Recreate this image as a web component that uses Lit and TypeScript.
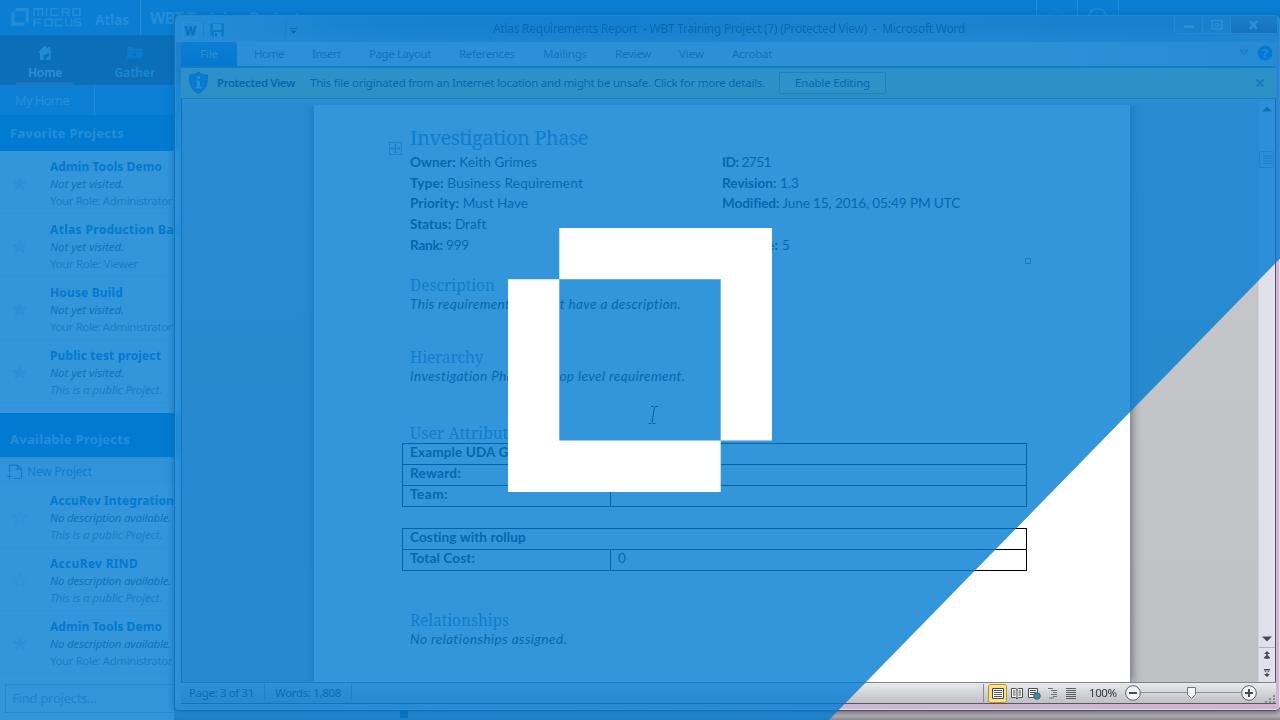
import { LitElement, html, css } from "lit";
import { customElement, property } from "lit/decorators.js";

/** Inline label whose tracking is adjusted so that it fills a given measure. */
@customElement("fit-text")
class FitText extends LitElement {
  @property({ type: Number }) w = 0;
  static styles = css`
    :host { display: inline-block; white-space: pre; flex: none; }
  `;
  firstUpdated() {
    const n = (this.textContent || "").length;
    const natural = this.getBoundingClientRect().width;
    if (n && this.w) this.style.letterSpacing = `${(this.w - natural) / n}px`;
  }
  render() { return html`<slot></slot>`; }
}

const starPath = "M8 1l2 5h5.2l-4.1 3.2 1.5 5.3L8 11.4l-4.6 3.1 1.5-5.3L.8 6H6z";

const favorites = [
  { t: "Admin Tools Demo", w: 112, d: "Not yet visited.", dw: 74, r: "Your Role: Administrator", rw: 122, on: true },
  { t: "Atlas Production Back", w: 138, d: "Not yet visited.", dw: 74, r: "Your Role: Viewer", rw: 88, on: true },
  { t: "House Build", w: 73, d: "Not yet visited.", dw: 74, r: "Your Role: Administrator", rw: 122, on: true },
  { t: "Public test project", w: 111, d: "Not yet visited.", dw: 74, r: "This is a public Project.", rw: 112, on: true, pub: true },
];
const available = [
  { t: "AccuRev Integration", w: 124, d: "No description available.", dw: 121, r: "This is a public Project.", rw: 112, on: false, pub: true },
  { t: "AccuRev RIND", w: 88, d: "No description available.", dw: 121, r: "This is a public Project.", rw: 112, on: false, pub: true },
  { t: "Admin Tools Demo", w: 112, d: "No description available.", dw: 121, r: "Your Role: Administrator", rw: 122, on: true },
];
const tabs: [string, number][] = [
  ["Home", 30], ["Insert", 29], ["Page Layout", 62], ["References", 56],
  ["Mailings", 44], ["Review", 36], ["View", 25], ["Acrobat", 40],
];

@customElement("app-root")
class AppRoot extends LitElement {
  static styles = css`
    :host { display: block; position: relative; width: 1280px; height: 720px; overflow: hidden; background: #fff; font-family: "Noto Sans", "Open Sans", sans-serif; }
    * { box-sizing: border-box; }
    svg { display: block; flex: none; }

    .atlas { width: 1280px; height: 720px; display: flex; flex-direction: column; background: linear-gradient(#2a5a8c, #2a5a8c) 400px 704px / 8px 14px no-repeat, linear-gradient(#b4b2b8, #b8b6ba 70%, #8a888c) 174px 706px / 1106px 14px no-repeat, #fff; }
    .top { height: 35px; background: #2e8ddd; display: flex; align-items: center; color: #d3e5f5; }
    .brand { display: flex; width: 141px; height: 35px; border-right: 1px solid #a8d0f0; padding: 7px 0 0 10px; gap: 3px; }
    .atlasname { font: 600 14px/24px "Noto Sans", sans-serif; color: #c4dcf0; margin: 1px 0 0 10px; }
    .proj { font: 600 16px/24px "Noto Sans", sans-serif; margin-left: 9px; color: #c4dcf0; }
    .cells { margin-left: auto; display: flex; height: 35px; margin-right: 161px; }
    .cell { width: 41px; border-left: 1px solid #a8d0f0; padding: 7px 0 0 9px; }
    .cell.last { border-right: 1px solid #a8d0f0; width: 42px; }
    .nav { height: 50px; background: #354350; display: flex; }
    .navitem { width: 90px; display: flex; flex-direction: column; align-items: center; padding-top: 10px; font: 600 12px/18px "Noto Sans", sans-serif; color: #86b8e2; }
    .navitem.on { color: #d4e2f0; }
    .navitem svg { margin-bottom: 3px; }
    .under { width: 58px; height: 3px; background: #c04848; }
    .sub { height: 30px; background: #3290de; display: flex; color: #bcdcf5; font: 13px/30px "Noto Sans", sans-serif; padding-left: 15px; }
    .sub .cellend { width: 80px; border-right: 1px solid #a8d0f0; height: 30px; }
    .side { width: 180px; }
    .hd { height: 36px; background: #0579d0; color: #b3d5f2; font: 700 13px/36px "Noto Sans", sans-serif; padding-left: 10px; }
    .hd.second { height: 44px; padding-top: 8px; }
    .item { display: flex; height: 63px; border-bottom: 1px solid #edf2f6; padding-left: 12px; }
    .item svg { margin-top: 25px; }
    .txt { padding: 7px 0 0 23px; display: flex; flex-direction: column; align-items: flex-start; }
    .t { font: 700 12px/18px "Noto Sans", sans-serif; color: #0b6fc0; margin-bottom: -1px; }
    .d { font: italic 11.5px/17px "Noto Sans", sans-serif; color: #4a5560; }
    .r { font: 11.5px/17px "Noto Sans", sans-serif; color: #7d8a96; }
    .r.pub { font-style: italic; }
    .gap { height: 10px; }
    .new { height: 28px; background: #f2f6f9; display: flex; align-items: center; padding: 1px 0 0 7px; gap: 4px; font: 12px/27px "Noto Sans", sans-serif; color: #4a88c0; }
    .find { margin: 10px 0 0 5px; height: 29px; width: 180px; border: 1px solid #b8c4ce; font: 13px/27px "Noto Sans", sans-serif; color: #93a1ae; padding-left: 6px; }

    .win { position: absolute; left: 174px; top: 15px; width: 1106px; height: 696px; border-radius: 6px 6px 5px 5px; border: 1px solid #514a58; border-top-color: #9cc8e8; border-right: none; background: linear-gradient(90deg, rgba(200, 218, 236, .6), #cbb8d2 60%, #d3b4d0); backdrop-filter: blur(5px); box-shadow: 0 0 7px 1px rgba(0, 15, 40, .55), inset 0 0 0 1px rgba(255, 255, 255, .55); padding: 0 4px 6px 6px; display: flex; flex-direction: column; }
    .title { height: 26px; display: flex; margin: 0 -3px 0 -5px; border-radius: 5px 5px 0 0; background: linear-gradient(transparent 40%, rgba(200, 222, 242, .4)), linear-gradient(90deg, rgba(190, 218, 242, .9), rgba(105, 155, 205, .85) 18%, rgba(80, 135, 190, .8) 40%, rgba(120, 165, 205, .8) 62%, rgba(95, 140, 190, .85) 92%, rgba(130, 160, 195, .8)); color: #16242f; font: 12px/25px "Noto Sans", sans-serif; }
    .qat { display: flex; padding: 6px 0 0 6px; width: 317px; color: #20303c; }
    .qat .sp { width: 1px; height: 15px; background: #7c96b4; margin: 0 6px 0 4px; }
    .qat .sp.b { margin: 0 3px 0 60px; }
    .ctl { margin: 0 1px 0 auto; display: flex; height: 18px; border: 1px solid #a8c4de; border-top: 0; border-radius: 0 0 4px 4px; }
    .ctl div { width: 28px; display: flex; align-items: center; justify-content: center; border-right: 1px solid #a8c4de; }
    .ctl .cl { width: 46px; background: linear-gradient(#8a86a0, #774d6c); border-right: 0; }
    .tabs { height: 24px; display: flex; background: linear-gradient(90deg, #d6e2f0, #dce6f0 80%, #bfcbdc); font: 11.5px/23px "Noto Sans", sans-serif; color: #4b5963; gap: 28px; border-radius: 2px 2px 0 0; }
    .file { width: 56px; height: 24px; margin-right: -11px; background: linear-gradient(#3a8ce0, #1c6acc); border-radius: 3px 3px 0 0; color: #c6daf0; padding-left: 19px; }
    .tabend { margin-left: auto; display: flex; gap: 6px; padding: 3px 2px 0 0; }
    .msg { height: 33px; border-top: 2px solid #6d7c90; border-bottom: 1px solid #7a9098; background: linear-gradient(#dde8b0, #e2e490); display: flex; align-items: center; padding-left: 7px; font: 11.5px/26px "Noto Sans", sans-serif; color: #121c24; }
    .msg .pv { font-weight: 600; margin: 0 15px 0 8px; }
    .msg .btn { margin-left: 14px; width: 107px; height: 22px; line-height: 20px; border: 1px solid #8c9a78; border-radius: 2px; padding-left: 15px; background: rgba(255, 255, 255, .12); }
    .msg .x { margin-left: auto; margin-right: 11px; }
    .work { height: 583px; display: flex; background: #c5c6ca; border-left: 1px solid #515863; }
    .canvas { flex: 1; padding: 6px 0 0 132px; background: linear-gradient(#e0e5ec, #c6c8cc 6px, #c5c6ca 180px, #c0c1c5); }
    .page { width: 816px; height: 577px; background: #fff; box-shadow: 3px 0 8px rgba(60, 60, 70, .5), -3px 0 7px rgba(60, 60, 70, .22); clip-path: inset(0 -14px 0 -12px); padding: 20px 0 0 88px; font: 13.6px/21px Lato, "Open Sans", sans-serif; color: #151515; position: relative; }
    h1, h2, p { margin: 0; font-weight: 400; }
    h1 { font: 20px/26px "Noto Serif", "Droid Serif", "DejaVu Serif Condensed", "DejaVu Serif", serif; color: #4f86bd; height: 27px; padding-left: 8px; }
    h2 { font: 15.5px/19px "Noto Serif", "Droid Serif", "DejaVu Serif Condensed", "DejaVu Serif", serif; color: #4f86bd; height: 20px; padding-left: 8px; }
    h2.hier { margin-top: 34px; }
    h2.attr { margin-top: 38px; }
    h2.rel { margin-top: 40px; }
    p { padding-left: 8px; font-style: italic; line-height: 18px; height: 19px; margin-top: -1px; }
    .facts { display: grid; grid-template-columns: 312px 1fr; grid-template-rows: 21px 20px 21px 21px 21px; padding-left: 8px; height: 124px; }
    .tbl { width: 625px; border: 1px solid #000; border-bottom: 0; display: grid; grid-template-columns: 208px 1fr; grid-auto-rows: 21px; line-height: 17px; margin-top: -1px; }
    .tbl.cost { margin-top: 21px; }
    .tbl div { border-bottom: 1px solid #000; padding-left: 7px; }
    .tbl .full { grid-column: 1 / 3; }
    .tbl .l { border-right: 1px solid #000; }
    .mv { position: absolute; left: 75px; top: 37px; }
    .sq { position: absolute; left: 711px; top: 153px; width: 6px; height: 6px; border: 1px solid #777; }
    .bar { width: 18px; background: #e0e1ed; border-left: 1px solid #d2d3de; border-right: 1px solid #5b5662; color: #464a58; }
    .status { height: 22px; border-top: 1px solid #82848a; border-bottom: 1px solid #5b5662; background: linear-gradient(#e8e9ec, #c6c8cd 80%, #bfc1c7); display: flex; align-items: center; font: 11.5px/20px "Noto Sans", sans-serif; color: #2e3238; padding-left: 8px; }
    .status .v { width: 1px; height: 18px; background: #9fa2a8; margin: 0 10px; }
    .tools { margin-left: auto; }

    .veil { position: absolute; inset: 0; background: rgba(0, 122, 209, .8); clip-path: polygon(0 0, 1280px 0, 1280px 258.5px, 829px 720px, 0 720px); }
    .mark { position: absolute; left: 508px; top: 228px; }
    .caret { position: absolute; left: 647px; top: 405px; }
  `;

  item(i: any) {
    return html`<div class="item">
      <svg width="15" height="15" viewBox="0 0 16 16"><path d=${starPath} fill=${i.on ? "#d2e4f4" : "none"} stroke="#d2e2f0" stroke-width=".8"/></svg>
      <div class="txt">
        <fit-text class="t" w=${i.w}>${i.t}</fit-text>
        <fit-text class="d" w=${i.dw}>${i.d}</fit-text>
        <fit-text class="r ${i.pub ? "pub" : ""}" w=${i.rw}>${i.r}</fit-text>
      </div></div>`;
  }

  fact(k: string, v: string, w: number) {
    return html`<div><fit-text w=${w}><b>${k}</b>${v}</fit-text></div>`;
  }

  atlas() {
    return html`<div class="atlas">
      <div class="top">
        <div class="brand">
          <svg width="72" height="21" viewBox="0 0 72 21" fill="none" stroke="#b5d3ec">
            <path d="M5.500 2.500H17.500V14.500" stroke-width="3"/><path d="M2.800 5.500V17.200H14.500" stroke-width="3"/><path d="M4.200 4h12v12h-12z" stroke-width=".6"/>
            <g stroke-width="1.500">
              <path d="M24 9V1.800h8.500V9M28.200 1.800V9M36.500 1V9M48.500 1.800h-7.500V8.200H48.500M52.500 9V1.800h6.500V5.500H52.500M56 5.500L59.500 9M63 1.800h7V8.200H63z"/>
              <path d="M24 19.500V12.200h8.500M24 15.700h7M35 12.200h7.200V18.500H35zM53 12.200h-7.500V18.500H53M55.800 11.500V18.500H61.800V11.500M71 12.200h-6.300V15.300H70.500V18.600H64"/>
            </g>
          </svg>
          <fit-text class="atlasname" w="34">Atlas</fit-text>
        </div>
        <fit-text class="proj" w="150">WBT Training Project</fit-text>
        <div class="cells">
          <div class="cell"><svg width="22" height="22" viewBox="0 0 22 22"><circle cx="10.500" cy="10.500" r="9" fill="#4a92d0" stroke="#6d9cc8"/></svg></div>
          <div class="cell last"><svg width="22" height="22" viewBox="0 0 22 22"><circle cx="10.500" cy="10.500" r="9" fill="none" stroke="#b5d8f2" stroke-width="1.700"/><path d="M10.500 5v6h4" fill="none" stroke="#b5d8f2"/></svg></div>
        </div>
      </div>
      <div class="nav">
        <div class="navitem on">
          <svg width="16" height="16" viewBox="0 0 16 16"><path d="M8 .5L.5 7.500H3V15H6.500V10H9.500V15H13.500V7.500H15.500L13.200 5.200V2H11.200V3.400z" fill="#a5cbe8"/><path d="M9 8.500h3v3H9z" fill="#31404c"/></svg>
          <fit-text w="34">Home</fit-text><span class="under"></span></div>
        <div class="navitem">
          <svg width="16" height="16" viewBox="0 0 16 16"><path d="M0 2h6l1 1.500h8.500V6H0z" fill="#2a85cc"/><path d="M0 6.500h15.500V13H0z" fill="#2a7fc4"/><path d="M6 7.800l4 2-4 2z" fill="#3a4650"/></svg>
          <fit-text w="41">Gather</fit-text></div>
      </div>
      <div class="sub"><div class="cellend"><fit-text w="54">My Home</fit-text></div></div>
      <div class="side">
        <div class="hd"><fit-text w="114">Favorite Projects</fit-text></div>
        ${favorites.map((i) => this.item(i))}
        <div class="gap"></div>
        <div class="hd second"><fit-text w="120">Available Projects</fit-text></div>
        <div class="new">
          <svg width="16" height="16" viewBox="0 0 16 16" fill="none" stroke="#4080b8" stroke-width="1.200"><path d="M2.500 8V1.200H10.500L14.500 5V14.500H6.500M10.200 1.200V5.200H14.500M2.500 9.500v6M0 12.500H5"/></svg>
          <fit-text w="65">New Project</fit-text></div>
        ${available.map((i) => this.item(i))}
        <div class="find"><fit-text w="85">Find projects...</fit-text></div>
      </div>
    </div>`;
  }

  page() {
    return html`<div class="page">
      <svg class="mv" width="14" height="14" viewBox="0 0 14 14" fill="none" stroke="#5a6a7c"><rect x=".5" y=".5" width="12" height="12" stroke="#8c9eb2"/><path d="M6.500 2v9M2 6.500h9M5 3.500L6.500 2 8 3.500M5 9.500L6.500 11 8 9.500M3.500 5L2 6.500 3.500 8M9.500 5L11 6.500 9.500 8" stroke-width=".8"/></svg>
      <span class="sq"></span>
      <h1><fit-text w="178">Investigation Phase</fit-text></h1>
      <div class="facts">
        ${this.fact("Owner:", " Keith Grimes", 127)}${this.fact("ID:", " 2751", 49)}
        ${this.fact("Type:", " Business Requirement", 173)}${this.fact("Revision:", " 1.3", 77)}
        ${this.fact("Priority:", " Must Have", 118)}${this.fact("Modified:", " June 15, 2016, 05:49 PM UTC", 238)}
        ${this.fact("Status:", " Draft", 76)}<div></div>
        ${this.fact("Rank:", " 999", 59)}${this.fact("Baseline:", " 5", 68)}
      </div>
      <h2><fit-text w="85">Description</fit-text></h2>
      <p><fit-text w="271">This requirement does not have a description.</fit-text></p>
      <h2 class="hier"><fit-text w="73">Hierarchy</fit-text></h2>
      <p><fit-text w="275">Investigation Phase is a top level requirement.</fit-text></p>
      <h2 class="attr"><fit-text w="114">User Attributes</fit-text></h2>
      <div class="tbl">
        <div class="full"><fit-text w="127"><b>Example UDA Group</b></fit-text></div>
        <div class="l"><fit-text w="51"><b>Reward:</b></fit-text></div><div></div>
        <div class="l"><fit-text w="38"><b>Team:</b></fit-text></div><div></div>
      </div>
      <div class="tbl cost">
        <div class="full"><fit-text w="116"><b>Costing with rollup</b></fit-text></div>
        <div class="l"><fit-text w="65"><b>Total Cost:</b></fit-text></div><div>0</div>
      </div>
      <h2 class="rel"><fit-text w="99">Relationships</fit-text></h2>
      <p><fit-text w="157">No relationships assigned.</fit-text></p>
    </div>`;
  }

  wordWindow() {
    return html`<div class="win">
      <div class="title">
        <div class="qat">
          <svg width="17" height="17" viewBox="0 0 17 17"><rect x="1" y=".5" width="15" height="15.500" fill="#a8cbec" stroke="#dceaf8"/><path d="M2.500 4h2.300l1.200 6 1.500-6h2l1.400 6 1.300-6h2.300l-2.600 9.500H9.700L8.500 8l-1.300 5.500H5z" fill="#1e4e8c"/></svg>
          <span class="sp"></span>
          <svg width="15" height="16" viewBox="0 0 15 16"><path d="M.5 1.500h13.500V14.500H2L.5 13z" fill="#3a74c0"/><path d="M3 2h8.500v6H3z" fill="#c4dcf0"/><path d="M4 10h7v4.500H4z" fill="#c4dcf0"/><path d="M5 11h2v3H5z" fill="#1c4888"/></svg>
          <span class="sp b"></span>
          <svg width="10" height="16" viewBox="0 0 10 16"><path d="M1 6.500h7M2 9h5L4.500 11.500z" stroke="#20303c" fill="#20303c" stroke-width="1"/></svg>
        </div>
        <fit-text w="472">Atlas Requirements Report  - WBT Training Project (7) (Protected View)  -  Microsoft Word</fit-text>
        <div class="ctl">
          <div><svg width="12" height="12"><path d="M1 6h10v3H1z" fill="#d0e0f0"/></svg></div>
          <div><svg width="12" height="12" fill="none" stroke="#d0e0f0"><rect x="1" y="1.500" width="10" height="8.500" stroke-width="1.500"/><path d="M4 4.500h4v2.500H4z"/></svg></div>
          <div class="cl"><svg width="12" height="12"><path d="M2 2l7 8M9 2l-7 8" stroke="#e0e8f2" stroke-width="2.400"/></svg></div>
        </div>
      </div>
      <div class="tabs">
        <div class="file"><fit-text w="18">File</fit-text></div>
        ${tabs.map(([t, w]) => html`<fit-text w=${w}>${t}</fit-text>`)}
        <div class="tabend">
          <svg width="12" height="16" viewBox="0 0 12 16"><path d="M2 5.500h2.500L6 7l1.500-1.500H10L6 10.500z" transform="translate(0 -.5)" fill="#c8d6e6" stroke="#3c5068"/></svg>
          <svg width="18" height="17" viewBox="0 0 18 17"><circle cx="9" cy="8" r="7.500" fill="#2070d8"/><text x="9" y="12.500" text-anchor="middle" font-size="12" font-weight="700" fill="#b0d0f0">?</text></svg>
        </div>
      </div>
      <div class="msg">
        <svg width="21" height="24" viewBox="0 0 21 24"><path d="M10.500 1C8 3.200 5 4 1.500 4c-.5 8 1.500 15 9 18.500C18 19 20 12 19.500 4 16 4 13 3.200 10.500 1z" fill="#2a78d0" stroke="#1f62b4"/><path d="M9 5h3v2.800H9zM7.800 9.500H12V16h1.500v1.500h-6V16H9v-5H7.800z" fill="#b8d4f0"/></svg>
        <fit-text class="pv" w="78">Protected View</fit-text>
        <fit-text w="455">This file originated from an Internet location and might be unsafe. Click for more details.</fit-text>
        <div class="btn"><fit-text w="75">Enable Editing</fit-text></div>
        <svg class="x" width="10" height="10"><path d="M1.500 1.500l7 7M8.500 1.500l-7 7" stroke="#4c5a58" stroke-width="1.600"/></svg>
      </div>
      <div class="work">
        <div class="canvas">${this.page()}</div>
        <div class="bar">
          <svg width="16" height="583" viewBox="0 0 16 583" fill="#464a58">
            <path d="M3 12.500h10L8 7.500z"/>
            <rect x=".5" y="52.500" width="14" height="16" rx="1" fill="#dcdfea" stroke="#90a0b4"/>
            <path d="M4 57h9M4 59.500h9M4 62h9M4 64.500h9" stroke="#7c8498" stroke-width=".8"/>
            <path d="M3 537.500h10l-5 5z"/><path d="M0 548.500h16" stroke="#b0b2bf"/>
            <path d="M8 552l3 3H5zM8 555.500l3 3H5zM7.200 555h1.600v5H7.200zM5 558.500h6v1H5z"/>
            <path d="M8 578l3-3H5zM8 574.500l3-3H5zM7.200 570h1.600v5H7.200zM5 570h6v1H5z"/>
          </svg>
        </div>
      </div>
      <div class="status">
        <fit-text w="65">Page: 3 of 31</fit-text><span class="v"></span><fit-text w="66">Words: 1,808</fit-text><span class="v"></span>
        <svg class="tools" width="296" height="20" viewBox="0 0 296 20" fill="none" stroke="#4a4c50">
          <path d="M3.500 1v18" stroke="#8b8d93"/>
          <rect x="8.500" y="1.500" width="18" height="18" rx="2" fill="#fbe08a" stroke="#b98f2e"/>
          <path d="M12.500 5.500h11v10h-11z" fill="#fff" stroke="#4c473a"/><path d="M14 7.500h8M14 9.500h8M14 11.500h8M14 13.500h8" stroke="#5e594c"/>
          <path d="M31.500 5.500h4l1.500 1 1.500-1h4v9h-4l-1.500 1.500-1.500-1.500h-4zM37 6.500V15" fill="#f4f4f6"/><path d="M33 8h2.500M33 10h2.500M33 12h2.500M38.500 8H41M38.500 10H41M38.500 12H41"/>
          <path d="M48.500 5.500h9v9h-9z" fill="#fff"/><path d="M50 7.500h6M50 9.500h6M50 11.500h4"/><circle cx="57" cy="13" r="3.300" fill="#3f8d9c" stroke="#37647c"/>
          <path d="M68 5.500h5M71 7.500h6M73 9.500h4M71 11.500h6M73 13.500h4M69 15h5" stroke="#707278"/>
          <path d="M86 5.500h10M86 7.500h10M86 9.500h10M86 11.500h10M86 13.500h10M86 15.500h10" stroke="#4e5056" stroke-width=".9"/>
          <text x="109" y="14" font-size="11.500" textLength="28" fill="#34363c" stroke="none">100%</text>
          <path d="M161 9.500h100" stroke="#8c9098"/>
          <circle cx="153" cy="10" r="7.300" fill="#f4f4f6" stroke="#5c6068"/><path d="M149 10h8" stroke-width="2"/>
          <path d="M207.500 4.500h8v7l-4 4-4-4z" fill="#f6f6f8" stroke="#6c7078"/>
          <circle cx="269" cy="10" r="7.300" fill="#f4f4f6" stroke="#5c6068"/><path d="M265 10h8M269 6v8" stroke-width="2"/>
          <path d="M293 13h2M289 16h2M293 16h2M285 19h2M289 19h2M293 19h2" stroke="#8a8c96" stroke-width="1.800"/>
        </svg>
      </div>
    </div>`;
  }

  render() {
    return html`
      ${this.atlas()}
      ${this.wordWindow()}
      <svg class="caret" width="13" height="20" viewBox="0 0 13 20" fill="none" stroke="#000"><path d="M4 1.500h3M8 1.500h3M7.500 2L5 18M1.500 18.500h3M5.500 18.500h3"/></svg>
      <div class="veil"></div>
      <svg class="mark" width="264" height="264" viewBox="0 0 264 264" fill="#fff">
        <path d="M51.300 0H264V212.500H212.700V51.300H51.300z"/><path d="M0 51.300H51.300V212.500H212.700V264H0z"/>
      </svg>`;
  }
}
